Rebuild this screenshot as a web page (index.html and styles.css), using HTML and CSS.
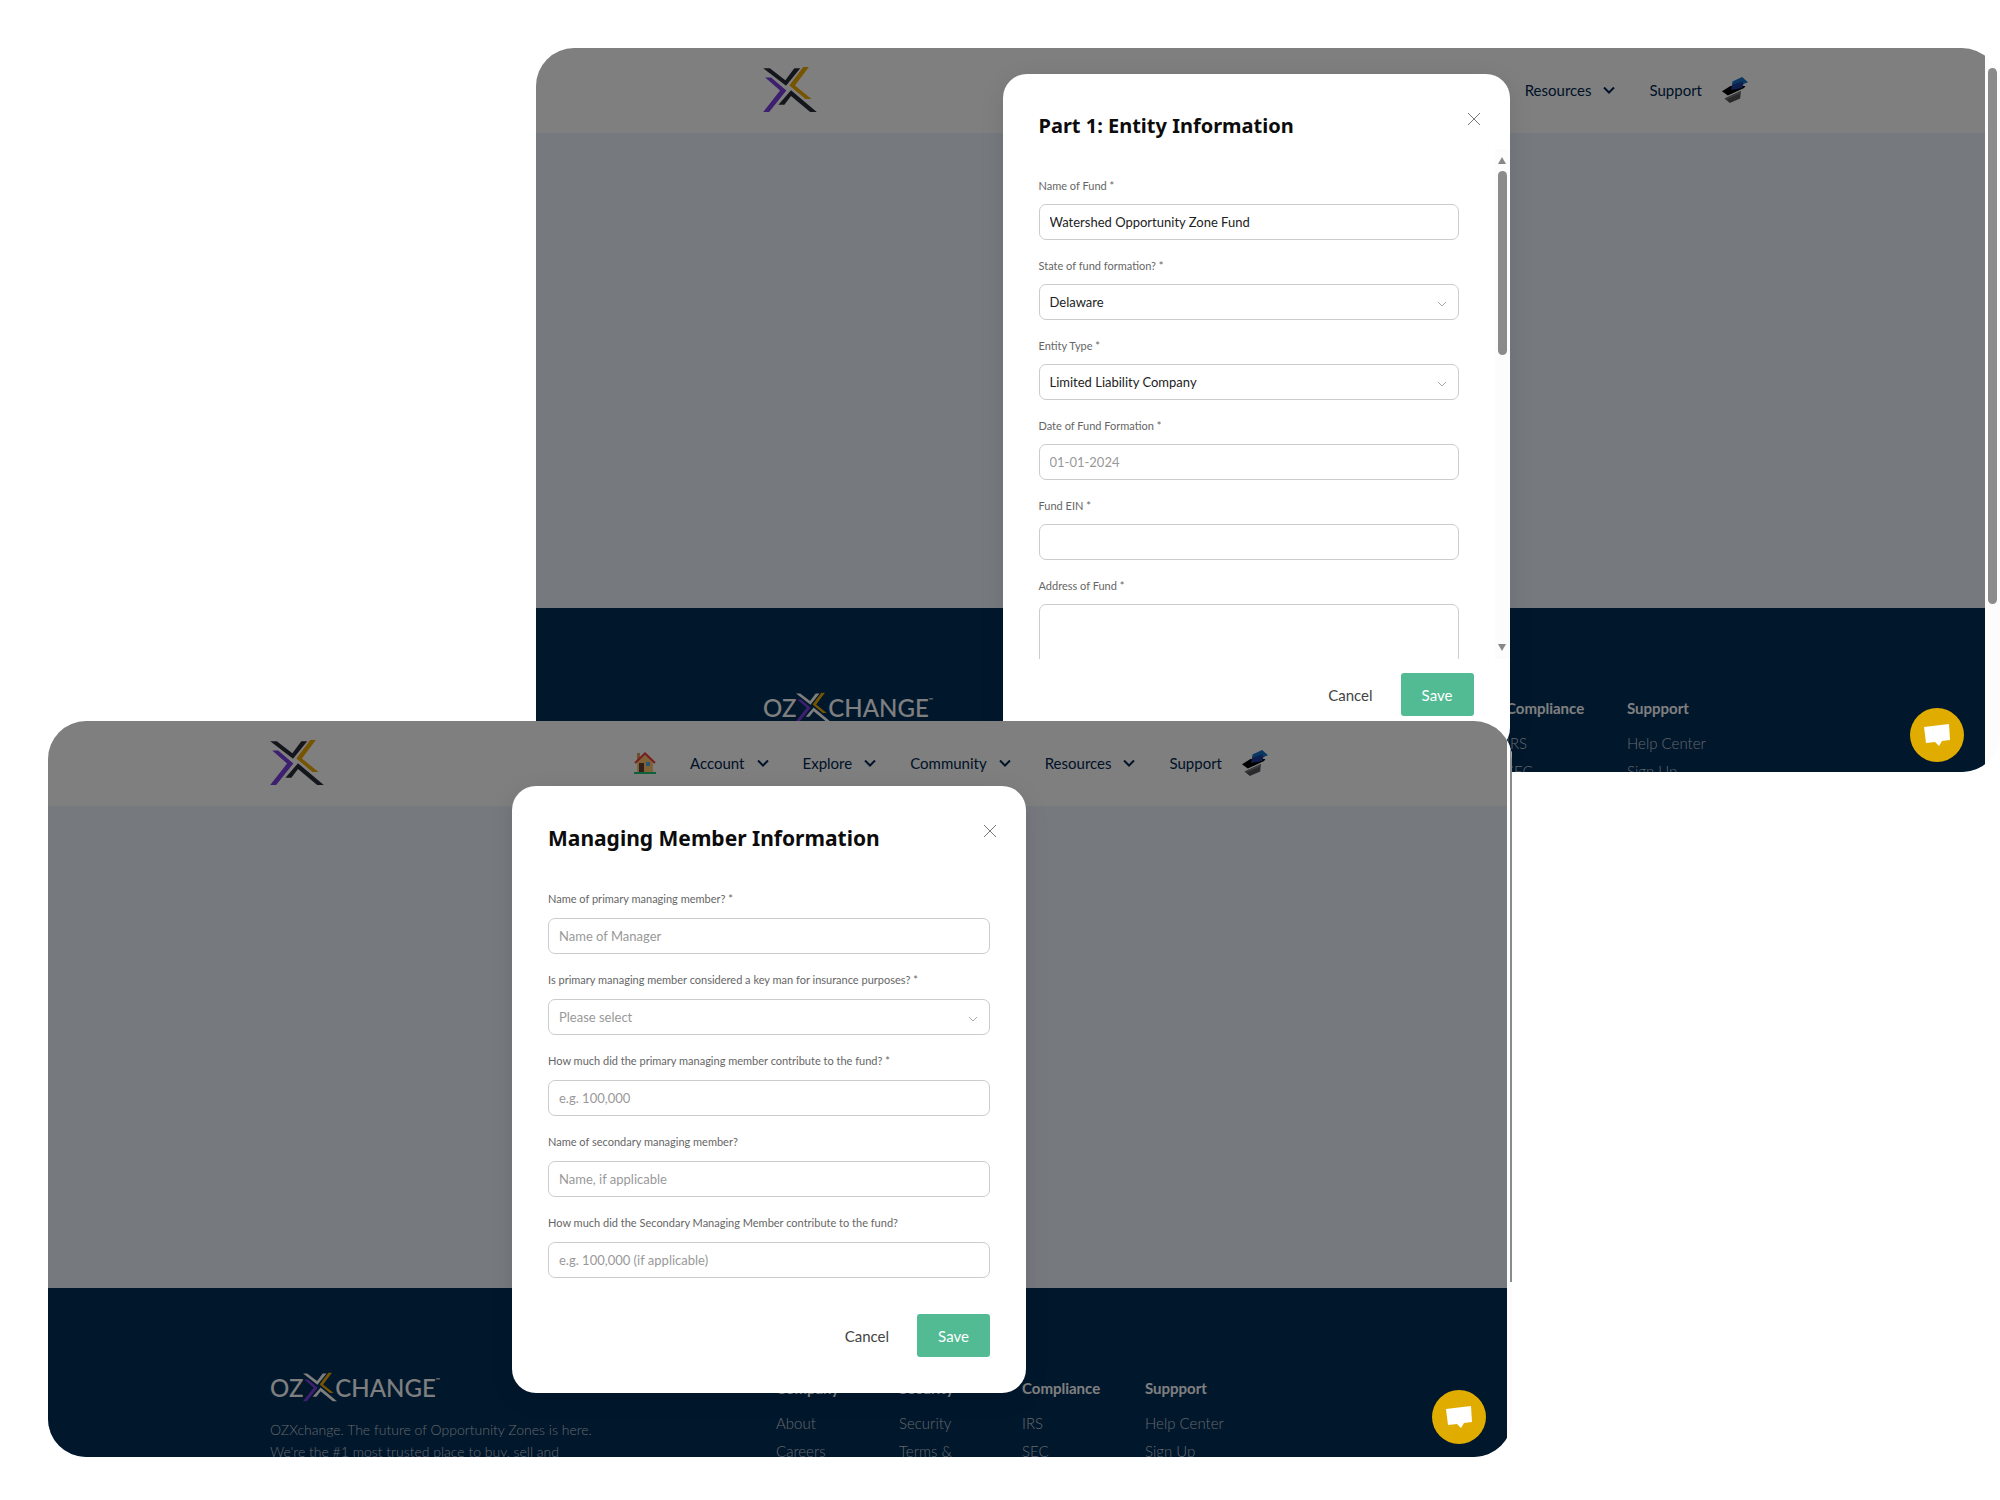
FILE: index.html
```
<!DOCTYPE html>
<html lang="en">
	<head>
		<meta charset="utf-8">
		<title>OZXchange</title>
		<link rel="stylesheet" href="styles.css">
	</head>
	<body>

		<!-- shared icons -->
		<svg class="sprite" aria-hidden="true">
			<symbol id="logo-x" viewBox="0 0 162 136">
				<path class="ink" d="M0 4H20L67 40L94 4H112L69 57Z"/>
				<path class="gold" d="M121 0H138L96 56L146 97H128L79 56Z"/>
				<path class="violet" d="M6 32H24L70 71L18 136H0L51 71Z"/>
				<path class="ink" d="M84 70L162 136H142L84 88L64 114H46Z"/>
			</symbol>
			<symbol id="icon-down" viewBox="0 0 12 8">
				<path d="M1 1.5L6 6.5L11 1.5" fill="none" stroke="currentColor" stroke-width="2"/>
			</symbol>
			<symbol id="icon-thin-down" viewBox="0 0 10 6">
				<path d="M1 1L5 5L9 1" fill="none" stroke="currentColor" stroke-width="1"/>
			</symbol>
			<symbol id="icon-close" viewBox="0 0 12 12">
				<path d="M0 0L12 12M12 0L0 12" fill="none" stroke="currentColor" stroke-width="1"/>
			</symbol>
			<symbol id="icon-stack" viewBox="0 0 80 80">
				<path fill="#555558" d="M8 66L58 43L56 66L24 80Z"/>
				<path fill="#77787a" d="M8 66L58 43L57 50L12 70Z"/>
				<path fill="#000" d="M0 44L26 28H72L68 34L18 57Z"/>
				<path fill="#1670c4" d="M32 14L62 0L80 16L64 22L30 36Z"/>
				<path fill="#1c3f9c" d="M31 24L62 14L66 22L62 34L28 40Z"/>
			</symbol>
			<symbol id="icon-house" viewBox="0 0 22 22">
				<path fill="#d9a05f" d="M3 1H6V8H3Z"/>
				<path fill="#ffc46a" d="M3 10L11 3L19 10V20H3Z"/>
				<path fill="none" stroke="#ee3c3c" stroke-width="2" d="M1 11L11 1.5L21 11"/>
				<path fill="#6b3f35" d="M5 11H10V20H5Z"/>
				<path fill="#5fa8e8" d="M12 10H16V14H12Z"/>
				<path fill="#1fc47a" d="M0 20H22V22H0Z"/>
			</symbol>
			<symbol id="icon-chat" viewBox="0 0 26 22">
				<path fill="#fff" d="M0 3L25 0L26 16L18 17L15 22L11 18L2 19Z"/>
			</symbol>
		</svg>

		<main class="stage">

			<!-- Part 1 screen -->
			<section class="screen screen-entity">
				<div class="page">
					<header class="topbar">
						<div class="inner">
							<svg class="mark"><use href="#logo-x"/></svg>
							<nav class="menu">
								<a href="#">Resources <svg class="caret"><use href="#icon-down"/></svg></a>
								<a href="#">Support</a>
								<svg class="stack"><use href="#icon-stack"/></svg>
							</nav>
						</div>
					</header>
					<div class="content"></div>
					<footer class="footer">
						<div class="inner">
							<div class="about">
								<div class="wordmark"><span>OZ</span><svg><use href="#logo-x"/></svg><span>CHANGE</span><small>™</small></div>
							</div>
							<div class="links">
								<h4>Compliance</h4>
								<a href="#">IRS</a>
								<a href="#">SEC</a>
							</div>
							<div class="links">
								<h4>Suppport</h4>
								<a href="#">Help Center</a>
								<a href="#">Sign Up</a>
							</div>
						</div>
					</footer>
					<div class="overlay">
						<form class="modal">
							<div class="modal-head">
								<h2>Part 1: Entity Information</h2>
								<button type="button" class="close" aria-label="Close"><svg><use href="#icon-close"/></svg></button>
							</div>
							<div class="modal-scroll">
								<div class="modal-body">
									<div class="field">
										<label for="fund-name">Name of Fund *</label>
										<input id="fund-name" type="text" value="Watershed Opportunity Zone Fund">
									</div>
									<div class="field">
										<label for="fund-state">State of fund formation? *</label>
										<div class="pick">
											<select id="fund-state"><option>Delaware</option></select>
											<svg><use href="#icon-thin-down"/></svg>
										</div>
									</div>
									<div class="field">
										<label for="fund-type">Entity Type *</label>
										<div class="pick">
											<select id="fund-type"><option>Limited Liability Company</option></select>
											<svg><use href="#icon-thin-down"/></svg>
										</div>
									</div>
									<div class="field">
										<label for="fund-date">Date of Fund Formation *</label>
										<input id="fund-date" type="text" placeholder="01-01-2024">
									</div>
									<div class="field">
										<label for="fund-ein">Fund EIN *</label>
										<input id="fund-ein" type="text">
									</div>
									<div class="field">
										<label for="fund-address">Address of Fund *</label>
										<textarea id="fund-address"></textarea>
									</div>
								</div>
								<div class="rail">
									<i class="up"></i>
									<i class="thumb"></i>
									<i class="down"></i>
								</div>
							</div>
							<div class="modal-foot">
								<button type="button" class="cancel">Cancel</button>
								<button type="button" class="save">Save</button>
							</div>
						</form>
					</div>
					<button type="button" class="chat" aria-label="Chat"><svg><use href="#icon-chat"/></svg></button>
				</div>
				<div class="page-rail"><i></i></div>
			</section>

			<!-- Managing member screen -->
			<section class="screen screen-member">
				<div class="page">
					<header class="topbar">
						<div class="inner">
							<svg class="mark"><use href="#logo-x"/></svg>
							<nav class="menu">
								<svg class="house"><use href="#icon-house"/></svg>
								<a href="#">Account <svg class="caret"><use href="#icon-down"/></svg></a>
								<a href="#">Explore <svg class="caret"><use href="#icon-down"/></svg></a>
								<a href="#">Community <svg class="caret"><use href="#icon-down"/></svg></a>
								<a href="#">Resources <svg class="caret"><use href="#icon-down"/></svg></a>
								<a href="#">Support</a>
								<svg class="stack"><use href="#icon-stack"/></svg>
							</nav>
						</div>
					</header>
					<div class="content"></div>
					<footer class="footer">
						<div class="inner">
							<div class="about">
								<div class="wordmark"><span>OZ</span><svg><use href="#logo-x"/></svg><span>CHANGE</span><small>™</small></div>
								<p>OZXchange. The future of Opportunity Zones is here.<br>We're the #1 most trusted place to buy, sell and</p>
							</div>
							<div class="links">
								<h4>Company</h4>
								<a href="#">About</a>
								<a href="#">Careers</a>
							</div>
							<div class="links">
								<h4>Security</h4>
								<a href="#">Security</a>
								<a href="#">Terms &amp;</a>
							</div>
							<div class="links">
								<h4>Compliance</h4>
								<a href="#">IRS</a>
								<a href="#">SEC</a>
							</div>
							<div class="links">
								<h4>Suppport</h4>
								<a href="#">Help Center</a>
								<a href="#">Sign Up</a>
							</div>
						</div>
					</footer>
					<div class="overlay">
						<form class="modal">
							<div class="modal-head">
								<h2>Managing Member Information</h2>
								<button type="button" class="close" aria-label="Close"><svg><use href="#icon-close"/></svg></button>
							</div>
							<div class="modal-body">
								<div class="field">
									<label for="primary-name">Name of primary managing member? *</label>
									<input id="primary-name" type="text" placeholder="Name of Manager">
								</div>
								<div class="field">
									<label for="key-man">Is primary managing member considered a key man for insurance purposes? *</label>
									<div class="pick">
										<select id="key-man" class="empty"><option>Please select</option></select>
										<svg><use href="#icon-thin-down"/></svg>
									</div>
								</div>
								<div class="field">
									<label for="primary-amount">How much did the primary managing member contribute to the fund? *</label>
									<input id="primary-amount" type="text" placeholder="e.g. 100,000">
								</div>
								<div class="field">
									<label for="second-name">Name of secondary managing member?</label>
									<input id="second-name" type="text" placeholder="Name, if applicable">
								</div>
								<div class="field">
									<label for="second-amount">How much did the Secondary Managing Member contribute to the fund?</label>
									<input id="second-amount" type="text" placeholder="e.g. 100,000 (if applicable)">
								</div>
							</div>
							<div class="modal-foot">
								<button type="button" class="cancel">Cancel</button>
								<button type="button" class="save">Save</button>
							</div>
						</form>
					</div>
					<button type="button" class="chat" aria-label="Chat"><svg><use href="#icon-chat"/></svg></button>
				</div>
				<div class="page-rail"><i></i></div>
			</section>

		</main>
	</body>
</html>
```
FILE: styles.css
```
* {
	box-sizing: border-box;
}

body {
	margin: 0;
	background: #fff;
	font-family: Lato, "Liberation Sans", sans-serif;
	font-size: 15px;
}

a {
	color: inherit;
	text-decoration: none;
}

.sprite {
	position: absolute;
	width: 0;
	height: 0;
}

.ink {
	fill: var(--ink);
}

.gold {
	fill: #eca900;
}

.violet {
	fill: #7b3fe0;
}

/* Screens, the second one lies over the first */
.stage {
	position: relative;
	min-height: 1500px;
}

.screen {
	position: absolute;
	display: flex;
	overflow: hidden;
	border-radius: 38px;
	background: #fcfcfc;
}

.screen-entity {
	--inner: 995px;
	--inner-end: 10px;
	--label-gap: 10px;
	--column: 121px;
	top: 48px;
	left: 26.8%;
	right: 0;
	height: 724px;
}

.screen-member {
	--inner: 1015px;
	--inner-end: 17px;
	--label-gap: 11px;
	--column: 123px;
	top: 721px;
	left: 2.4%;
	width: 73.2%;
	height: 736px;
}

.page {
	position: relative;
	flex: 1;
	display: flex;
	flex-direction: column;
	min-width: 0;
	overflow: hidden;
}

.inner {
	display: flex;
	width: var(--inner);
	margin: 0 auto;
	padding-right: var(--inner-end);
}

/* Top bar */
.topbar {
	--ink: #282c38;
	flex-shrink: 0;
	height: 85px;
	padding-bottom: 2px;
	background: #fff;
	color: #00264f;
}

.topbar .inner {
	height: 100%;
	align-items: center;
	justify-content: space-between;
}

.mark {
	width: 54px;
	height: 45px;
}

.menu {
	display: flex;
	align-items: center;
}

.menu a {
	display: flex;
	align-items: center;
	gap: 12px;
	margin-left: 34px;
}

.caret {
	width: 12px;
	height: 8px;
}

.house {
	width: 22px;
	height: 22px;
}

.stack {
	width: 26px;
	height: 26px;
	margin-left: 20px;
}

.content {
	flex-shrink: 0;
	background: #edf3fc;
}

.screen-entity .content {
	height: 475px;
}

.screen-member .content {
	height: 482px;
}

/* Footer */
.footer {
	--ink: #fff;
	flex: 1;
	min-height: 0;
	padding-top: 84px;
	background: #002e59;
	color: #c6ccd4;
	font-weight: 300;
}

.about {
	flex: 1;
}

.about p {
	margin: 17px 0 0;
	font-size: 14px;
	line-height: 22px;
}

.wordmark {
	display: flex;
	align-items: center;
	height: 30px;
	color: #fff;
	font-size: 24px;
	font-weight: 500;
}

.wordmark svg {
	width: 34px;
	height: 30px;
	margin-right: -2px;
}

.wordmark small {
	align-self: flex-start;
	font-size: 6px;
	line-height: 16px;
}

.links {
	display: flex;
	flex-direction: column;
	width: var(--column);
	line-height: 28px;
}

.links h4 {
	margin: 2px 0 7px;
	color: #fff;
	font-size: 15px;
	font-weight: 700;
}

/* Modal */
.overlay {
	position: absolute;
	inset: 0;
	display: flex;
	justify-content: center;
	align-items: flex-start;
	background: rgba(0, 0, 0, 0.5);
}

.screen-entity .overlay {
	padding: 26px 9px 0 0;
}

.screen-member .overlay {
	padding: 65px 17px 0 0;
}

.modal {
	border-radius: 24px;
	background: #fff;
	box-shadow: 0 6px 24px rgba(0, 0, 0, 0.1);
}

.screen-entity .modal {
	width: 507px;
}

.screen-member .modal {
	width: 514px;
}

.modal-head {
	display: flex;
	justify-content: space-between;
	height: 75px;
	padding: 37px 28px 0 36px;
}

.modal-head h2 {
	margin: 0;
	color: #0c0c0c;
	font-family: "Noto Sans", sans-serif;
	font-size: 20px;
	font-weight: 700;
	line-height: 30px;
	white-space: nowrap;
}

.screen-member h2 {
	font-size: 21px;
}

.close {
	align-self: flex-start;
	display: flex;
	padding: 2px;
	border: 0;
	background: none;
	color: #777;
}

.close svg {
	width: 12px;
	height: 12px;
}

.modal-scroll {
	display: flex;
	height: 510px;
	overflow: hidden;
}

.modal-scroll .modal-body {
	flex: 1;
}

.modal-body {
	display: flex;
	flex-direction: column;
	gap: 18px;
	padding: 29px 36px 0;
}

.screen-member .modal-body {
	padding-top: 30px;
}

.field {
	display: flex;
	flex-direction: column;
	gap: var(--label-gap);
}

.field label {
	color: #666;
	font-size: 11px;
	line-height: 16px;
}

.field input,
.field select,
.field textarea {
	display: block;
	width: 100%;
	height: 36px;
	padding: 0 10px;
	border: 1px solid #ccc;
	border-radius: 7px;
	background: #fff;
	color: #222;
	font-family: inherit;
	font-size: 13px;
	appearance: none;
}

.field textarea {
	height: 90px;
	resize: none;
}

.field ::placeholder,
.field .empty {
	color: #999;
	opacity: 1;
}

.pick {
	position: relative;
}

.pick svg {
	position: absolute;
	right: 12px;
	top: 17px;
	width: 10px;
	height: 6px;
	color: #aaa;
}

.modal-foot {
	display: flex;
	justify-content: flex-end;
	gap: 28px;
	padding: 36px;
}

.screen-entity .modal-foot {
	padding-top: 14px;
}

.modal-foot button {
	height: 43px;
	padding: 0;
	border: 0;
	border-radius: 3px;
	background: none;
	color: #444;
	font-family: inherit;
	font-size: 15px;
}

.modal-foot .save {
	width: 73px;
	background: #53bb94;
	color: #fff;
}

/* Scroll rails */
.rail {
	display: flex;
	flex-direction: column;
	align-items: center;
	width: 15px;
	padding: 8px 0;
	background: #fcfcfc;
}

.rail .up,
.rail .down {
	border: 4px solid transparent;
}

.rail .up {
	border-top: 0;
	border-bottom: 7px solid #888;
}

.rail .down {
	margin-top: auto;
	border-bottom: 0;
	border-top: 7px solid #888;
}

.rail .thumb {
	width: 9px;
	height: 184px;
	margin-top: 7px;
	border-radius: 5px;
	background: #8b8b8b;
}

.page-rail {
	width: 15px;
	padding: 20px 3px 0;
	background: #fcfcfc;
}

.page-rail i {
	display: block;
	width: 9px;
	height: 536px;
	border-radius: 5px;
	background: #8b8b8b;
}

.screen-member .page-rail {
	width: 5px;
	padding: 0 0 0 3px;
}

.screen-member .page-rail i {
	width: 2px;
	height: 561px;
	border-radius: 0;
}

/* Chat bubble */
.chat {
	position: absolute;
	right: 21px;
	bottom: 10px;
	display: flex;
	align-items: center;
	justify-content: center;
	width: 54px;
	height: 54px;
	padding: 0;
	border: 0;
	border-radius: 50%;
	background: #e0ac00;
}

.screen-member .chat {
	bottom: 13px;
}

.chat svg {
	width: 26px;
	height: 22px;
}
```
